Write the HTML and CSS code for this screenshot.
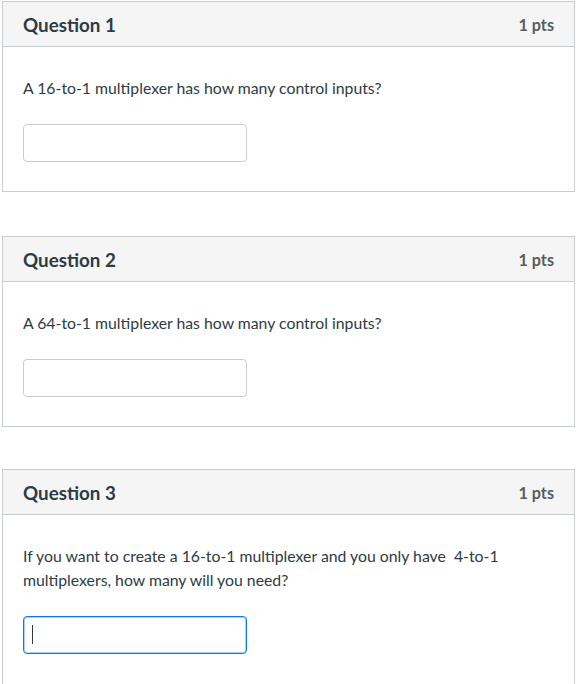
FILE: index.html
```html
<!DOCTYPE html>
<html lang="en">
<head>
<meta charset="utf-8">
<title>Quiz</title>
<link rel="stylesheet" href="styles.css">
</head>
<body>
<div class="quiz">
  <div class="question">
    <div class="q-header">
      <h2 class="q-title">Question 1</h2>
      <span class="q-points">1 pts</span>
    </div>
    <div class="q-body">
      <p class="q-text">A 16-to-1 multiplexer has how many control inputs?</p>
      <div class="answer"><input class="answer-input" type="text" aria-label="Answer"></div>
    </div>
  </div>

  <div class="question q-second">
    <div class="q-header">
      <h2 class="q-title">Question 2</h2>
      <span class="q-points">1 pts</span>
    </div>
    <div class="q-body">
      <p class="q-text">A 64-to-1 multiplexer has how many control inputs?</p>
      <div class="answer"><input class="answer-input" type="text" aria-label="Answer"></div>
    </div>
  </div>

  <div class="question q-third">
    <div class="q-header">
      <h2 class="q-title">Question 3</h2>
      <span class="q-points">1 pts</span>
    </div>
    <div class="q-body">
      <p class="q-text">If you want to create a 16-to-1 multiplexer and you only have&nbsp; <span class="nowrap">4-to-1</span> multiplexers, how many will you need?</p>
      <div class="answer"><input class="answer-input is-focused" type="text" aria-label="Answer"><span class="caret"></span></div>
    </div>
  </div>
</div>
</body>
</html>
```

FILE: styles.css
```css
html, body {
  margin: 0;
  padding: 0;
  background: #ffffff;
}

body {
  font-family: Lato, "Open Sans", "Liberation Sans", sans-serif;
  color: #2d3b45;
}

.quiz {
  padding: 1px 2px 0 2px;
  display: flex;
  flex-direction: column;
}

.question {
  border: 1px solid #c7cdd1;
  background: #ffffff;
}

.q-second {
  margin-top: 44px;
}

.q-third {
  margin-top: 42px;
}

.q-header {
  height: 44px;
  box-sizing: content-box;
  background: #f5f5f5;
  border-bottom: 1px solid #c7cdd1;
  display: flex;
  align-items: center;
  justify-content: space-between;
  padding: 0 20px;
}

.q-title {
  margin: 0;
  font-size: 18.8px;
  font-weight: 700;
  color: #2d3b45;
}

.q-points {
  font-size: 16.2px;
  font-weight: 700;
  color: #575c60;
}

.q-body {
  padding: 29px 20px 29px 20px;
}

.q-third .q-body {
  padding-bottom: 40px;
}

.q-text {
  margin: 0 0 24px 0;
  font-size: 15.8px;
  line-height: 24px;
  color: #2d3b45;
  max-width: 500px;
}

.nowrap {
  white-space: nowrap;
}

.answer {
  position: relative;
  width: 224px;
  height: 38px;
}

.answer-input {
  box-sizing: border-box;
  width: 224px;
  height: 38px;
  margin: 0;
  padding: 0 8px;
  border: 1px solid #c7cdd1;
  border-radius: 4px;
  background: #ffffff;
  font-family: inherit;
  font-size: 16px;
  outline: none;
}

.answer-input.is-focused {
  border: 1px solid #0b7be8;
  box-shadow: inset 0 0 0 1px rgba(11, 123, 232, 0.35);
}

.caret {
  position: absolute;
  left: 9px;
  top: 9px;
  width: 1px;
  height: 19px;
  background: #2d3b45;
}
```
